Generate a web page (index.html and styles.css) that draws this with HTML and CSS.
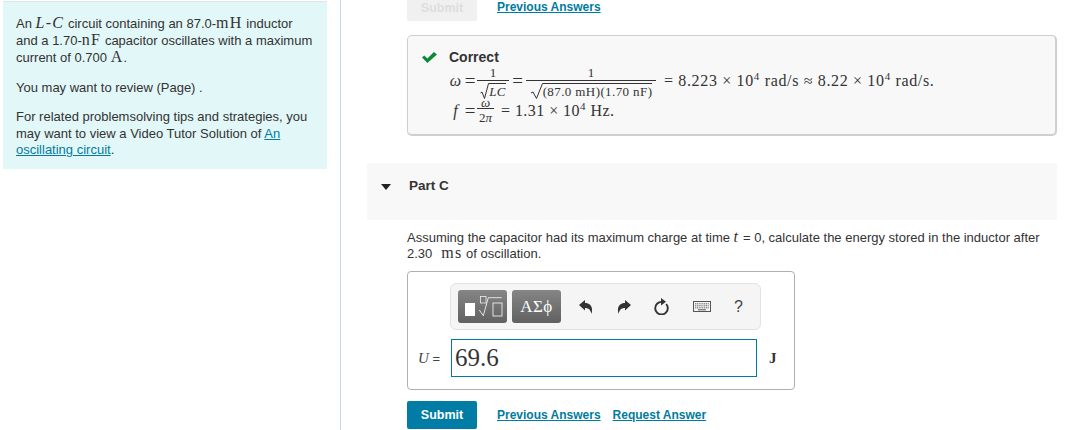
FILE: index.html
```html
<!DOCTYPE html>
<html lang="en">
<head>
  <meta charset="UTF-8">
  <title>Part C</title>
  <link rel="stylesheet" href="styles.css">
</head>
<body>
  <div class="page">
    <!-- Intro column -->
    <aside class="sidebar">
      <div class="intro">
        <p>An <span class="math"><i>L</i>-<i>C</i></span> circuit containing an 87.0-<span class="math">mH</span> inductor<br>and a 1.70-<span class="math">nF</span> capacitor oscillates with a maximum<br>current of 0.700 <span class="math">A</span>.</p>
        <p>You may want to review (Page) .</p>
        <p>For related problemsolving tips and strategies, you may want to view a Video Tutor Solution of <a href="#">An oscillating circuit</a>.</p>
      </div>
    </aside>

    <main class="main">
      <div class="actions top-actions">
        <button class="submit disabled">Submit</button>
        <a class="action-link" href="#">Previous Answers</a>
      </div>

      <!-- Feedback box -->
      <div class="feedback">
        <svg class="check" width="15" height="11" viewBox="0 0 15 11"><path d="M0 5.6 L2.2 3.4 L5.4 6.4 L11.9 0 L15 2.6 L5.4 11 Z" fill="#0a8a38"/></svg>
        <div class="feedback-body">
          <div class="correct">Correct</div>
          <div class="eq eq-one">
            <i class="eq-var">ω</i><span class="eq-sign">=</span>
            <span class="frac frac-lc">
              <span class="num">1</span>
              <span class="den">
                <svg class="radical" width="9" height="17" viewBox="0 0 9 17"><path d="M0.5 10 L2 9 L4.5 15.5 L8.5 0.5 H9" fill="none" stroke="#333"/></svg>
                <span class="over"><i>LC</i></span>
              </span>
            </span>
            <span class="eq-tight">=</span>
            <span class="frac frac-wide">
              <span class="num">1</span>
              <span class="den">
                <svg class="radical" width="13" height="17" viewBox="0 0 13 17"><path d="M1 10 L3 9 L6.5 15.5 L12.5 0.5 H13" fill="none" stroke="#333"/></svg>
                <span class="over">(87.0 mH)(1.70 nF)</span>
              </span>
            </span>
            <span class="eq-result">= 8.223 × 10<sup>4</sup> rad/s ≈ 8.22 × 10<sup>4</sup> rad/s.</span>
          </div>
          <div class="eq eq-two">
            <i class="eq-var">f</i><span class="eq-sign">=</span>
            <span class="frac frac-pi"><span class="num"><i>ω</i></span><span class="den">2<i>π</i></span></span>
            <span class="eq-rest">= 1.31 × 10<sup>4</sup> Hz.</span>
          </div>
        </div>
      </div>

      <div class="part-header">
        <span class="caret"></span>
        <span class="part-title">Part C</span>
      </div>

      <p class="question">Assuming the capacitor had its maximum charge at time <span class="math"><i>t</i></span> = 0, calculate the energy stored in the inductor after 2.30 <span class="math">&nbsp;ms</span> of oscillation.</p>

      <!-- Answer box -->
      <div class="answer">
        <div class="toolbar">
          <div class="tool-btn tool-templates">
            <svg width="49" height="33" viewBox="0 0 49 33">
              <rect x="7" y="13" width="10" height="13" fill="#fff"/>
              <rect x="22.5" y="6.5" width="5.5" height="6.5" fill="none" stroke="#eee" stroke-width="0.8"/>
              <path d="M21.3 20 L25.3 25.7 L30.3 7.7 H43.7" fill="none" stroke="#eee" stroke-width="0.9"/>
              <rect x="35" y="13" width="9" height="13" fill="none" stroke="#eee" stroke-width="0.9"/>
            </svg>
          </div>
          <div class="tool-btn tool-symbols">ΑΣϕ</div>
          <div class="tool-icons">
            <svg width="14" height="14" viewBox="0 0 14 14"><path d="M0 5 L6 0 V3 C11 3 14.5 6.5 12.5 14 C11.5 10 10 8 6 8 V10.5 Z" fill="#333"/></svg>
            <svg width="14" height="14" viewBox="0 0 14 14"><path d="M14 5 L8 0 V3 C3 3 -0.5 6.5 1.5 14 C2.5 10 4 8 8 8 V10.5 Z" fill="#333"/></svg>
            <svg width="15" height="17" viewBox="0 0 15 17"><path d="M7.5 3.9 A6.3 6.3 0 1 0 13.8 10.2 C13.8 8.6 13.2 7.2 12.2 6" fill="none" stroke="#333" stroke-width="1.9"/><path d="M7 0 L12 3.8 L7 7.4 Z" fill="#333"/></svg>
            <svg width="18" height="11" viewBox="0 0 18 11"><rect x="0.5" y="0.5" width="17" height="10" fill="#f5f5f5" stroke="#555"/><path d="M2 2.8h14M2 4.8h14M2 6.8h14" stroke="#666" stroke-dasharray="1.2 .6"/><path d="M5 8.8h8" stroke="#555"/></svg>
            <span class="tool-help">?</span>
          </div>
        </div>
        <div class="answer-row">
          <label class="answer-label"><i>U</i> <span class="label-eq">=</span></label>
          <div class="answer-input">69.6</div>
          <span class="answer-unit">J</span>
        </div>
      </div>

      <div class="actions">
        <button class="submit">Submit</button>
        <a class="action-link" href="#">Previous Answers</a>
        <a class="action-link" href="#">Request Answer</a>
      </div>
    </main>
  </div>
</body>
</html>
```

FILE: styles.css
```css
body {
  margin: 0;
  padding: 0;
  font-family: "Liberation Sans", Arial, sans-serif;
  font-size: 13px;
  color: #333;
  background-color: #fff;
  overflow: hidden;
}

.page {
  display: flex;
  height: 430px;
  overflow: hidden;
}

/* Left column */
.sidebar {
  width: 341px;
  height: 430px;
  flex-shrink: 0;
  border-right: 1px solid #c4d6e8;
  padding: 1px 13px 0 3px;
  box-sizing: border-box;
}

.intro {
  height: 168px;
  box-sizing: border-box;
  background-color: #e2f7f7;
  border-top: 1px solid #dfe6e8;
  padding: 13px 8px 0 13px;
  line-height: 17px;
}

.intro p {
  margin: 0 0 13px 0;
}

.intro p:last-child {
  line-height: 16.5px;
}

.intro a {
  color: #007c9e;
}

.math {
  font-family: "Liberation Serif", serif;
  font-size: 16px;
  line-height: 0;
  letter-spacing: 1.3px;
}

/* Main column */
.main {
  width: 690px;
  flex-shrink: 0;
  margin-left: 26px;
  margin-top: -8px;
}

.actions {
  display: flex;
  align-items: center;
  height: 28px;
  margin-left: 40px;
}

.top-actions {
  height: 29px;
}

.submit {
  width: 70px;
  height: 28px;
  border: none;
  border-radius: 2px;
  background-color: #007ca5;
  color: #fff;
  font-family: "Liberation Sans", Arial, sans-serif;
  font-size: 12.5px;
  font-weight: bold;
  margin-right: 20px;
  padding: 0;
}

.submit.disabled {
  height: 29px;
  padding-top: 3px;
  background-color: #f0f0f0;
  color: #dedede;
}

.action-link {
  color: #007c9e;
  font-size: 12px;
  font-weight: bold;
  margin-right: 12px;
}

/* Feedback box */
.feedback {
  display: flex;
  width: 650px;
  height: 101px;
  box-sizing: border-box;
  margin: 14px 0 0 40px;
  padding: 14px 0 0 14px;
  background-color: #f8f8f8;
  border: 1px solid #cfcfcf;
  border-right-width: 2px;
  border-bottom-width: 2px;
  border-radius: 5px;
}

.check {
  flex-shrink: 0;
  margin: 2px 0 0 0;
}

.feedback-body {
  margin-left: 12px;
}

.correct {
  font-size: 14px;
  font-weight: bold;
  line-height: 14px;
}

.eq {
  display: flex;
  align-items: flex-start;
  font-family: "Liberation Serif", serif;
  font-size: 16px;
  color: #333;
  white-space: nowrap;
}

.eq sup {
  font-size: 11px;
  line-height: 0;
}

.eq-one {
  height: 33px;
  line-height: 33px;
}

.eq-two {
  height: 28px;
  line-height: 28px;
}

.eq-var {
  width: 13px;
  text-align: center;
}

.eq-sign {
  width: 16px;
  font-size: 19px;
  margin-right: -1px;
  text-align: center;
}

.eq-tight {
  width: 17px;
  font-size: 19px;
  text-align: center;
}

.eq-result {
  margin-left: 8px;
  letter-spacing: 0.65px;
}

.eq-rest {
  margin-left: 7px;
  letter-spacing: 0.45px;
}

.frac {
  display: flex;
  flex-direction: column;
  align-items: center;
  font-size: 13px;
}

.frac-lc {
  width: 32px;
}

.frac-wide {
  width: 130px;
}

.frac-pi {
  width: 17px;
}

.num {
  align-self: stretch;
  box-sizing: content-box;
  height: 16px;
  line-height: 18px;
  text-align: center;
  border-bottom: 1px solid #333;
}

.den {
  display: flex;
  align-items: flex-start;
  height: 18px;
  line-height: 18px;
  padding-top: 2px;
}

.over {
  border-top: 1px solid #333;
  line-height: 15px;
  height: 15px;
  letter-spacing: 0.4px;
}

.frac-pi .num {
  height: 11px;
  line-height: 11px;
}

.frac-pi .den {
  padding-top: 0;
}

/* Part header */
.part-header {
  display: flex;
  align-items: flex-start;
  height: 57px;
  margin-top: 27px;
  padding: 15px 0 0 14px;
  box-sizing: border-box;
  background-color: #f8f8f8;
}

.caret {
  width: 0;
  height: 0;
  margin: 6px 18px 0 0;
  border-left: 5px solid transparent;
  border-right: 5px solid transparent;
  border-top: 6px solid #222;
}

.part-title {
  font-size: 13.5px;
  font-weight: bold;
  line-height: 16px;
}

.question {
  width: 645px;
  margin: 10px 0 0 40px;
  line-height: 16px;
}

/* Answer box */
.answer {
  width: 388px;
  height: 119px;
  box-sizing: border-box;
  margin: 9px 0 11px 40px;
  padding: 11px 0 0 9px;
  border: 1px solid #b0b0b0;
  border-radius: 4px;
}

.toolbar {
  display: flex;
  align-items: center;
  width: 311px;
  height: 47px;
  margin-left: 33px;
  box-sizing: border-box;
  padding: 0 0 0 7px;
  background-color: #f5f5f5;
  border: 1px solid #e2e2e2;
  border-radius: 6px;
}

.tool-btn {
  display: flex;
  align-items: center;
  justify-content: center;
  width: 49px;
  height: 33px;
  border-radius: 3px;
  background: linear-gradient(#858585, #616161);
  color: #fff;
}

.tool-symbols {
  margin-left: 5px;
  font-family: "Liberation Serif", serif;
  font-size: 17px;
  letter-spacing: 0.5px;
}

.tool-icons {
  display: flex;
  align-items: center;
  gap: 23.5px;
  margin-left: 18px;
}

.tool-help {
  font-size: 16px;
  color: #444;
}

.answer-row {
  display: flex;
  align-items: center;
  margin-top: 9px;
}

.answer-label {
  flex-shrink: 0;
  box-sizing: border-box;
  width: 34px;
  padding-left: 1px;
  font-family: "Liberation Serif", serif;
  font-size: 15px;
  white-space: nowrap;
  color: #444;
}

.label-eq {
  font-family: "Liberation Sans", Arial, sans-serif;
  font-size: 13px;
}

.answer-input {
  width: 306px;
  height: 38px;
  box-sizing: border-box;
  flex-shrink: 0;
  padding-left: 3px;
  border: 1px solid #007c9e;
  font-family: "Liberation Serif", serif;
  font-size: 25px;
  line-height: 35px;
}

.answer-unit {
  margin-left: 12px;
  font-family: "Liberation Serif", serif;
  font-size: 15px;
  font-weight: bold;
  flex-shrink: 0;
}
```
